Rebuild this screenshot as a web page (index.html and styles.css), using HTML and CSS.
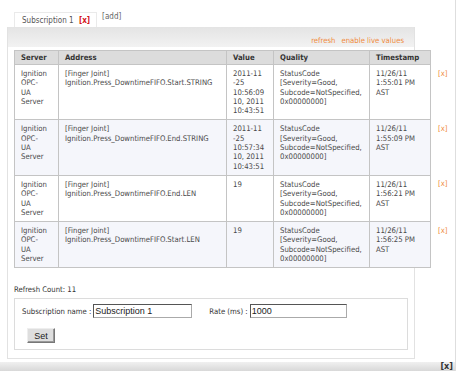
FILE: index.html
```html
<!DOCTYPE html>
<html lang="en">
<head>
    <meta charset="UTF-8">
    <title>Subscription 1</title>
    <link rel="stylesheet" href="styles.css">
</head>
<body>
    <div class="frame">
        <div class="tabs">
            <div class="tab">Subscription 1 <span class="tab-close">[x]</span></div>
            <a class="tab-add">[add]</a>
        </div>
        <div class="panel">
            <div class="panel-head">
                <a class="link">refresh</a>
                <a class="link">enable live values</a>
            </div>
            <table class="values">
                <colgroup>
                    <col class="c-server">
                    <col class="c-address">
                    <col class="c-value">
                    <col class="c-quality">
                    <col class="c-time">
                    <col class="c-remove">
                </colgroup>
                <thead>
                    <tr>
                        <th>Server</th>
                        <th>Address</th>
                        <th>Value</th>
                        <th>Quality</th>
                        <th>Timestamp</th>
                        <th class="remove"></th>
                    </tr>
                </thead>
                <tbody>
                    <tr>
                        <td>Ignition<br>OPC-<br>UA<br>Server</td>
                        <td>[Finger Joint]<br>Ignition.Press_DowntimeFIFO.Start.STRING</td>
                        <td>2011-11<br>-25<br>10:56:09<br>10, 2011<br>10:43:51</td>
                        <td>StatusCode [Severity=Good, Subcode=NotSpecified, 0x00000000]</td>
                        <td>11/26/11<br>1:55:01 PM<br>AST</td>
                        <td class="remove"><a class="link">[x]</a></td>
                    </tr>
                    <tr class="alt">
                        <td>Ignition<br>OPC-<br>UA<br>Server</td>
                        <td>[Finger Joint]<br>Ignition.Press_DowntimeFIFO.End.STRING</td>
                        <td>2011-11<br>-25<br>10:57:34<br>10, 2011<br>10:43:51</td>
                        <td>StatusCode [Severity=Good, Subcode=NotSpecified, 0x00000000]</td>
                        <td>11/26/11<br>1:55:09 PM<br>AST</td>
                        <td class="remove"><a class="link">[x]</a></td>
                    </tr>
                    <tr>
                        <td>Ignition<br>OPC-<br>UA<br>Server</td>
                        <td>[Finger Joint]<br>Ignition.Press_DowntimeFIFO.End.LEN</td>
                        <td>19</td>
                        <td>StatusCode [Severity=Good, Subcode=NotSpecified, 0x00000000]</td>
                        <td>11/26/11<br>1:56:21 PM<br>AST</td>
                        <td class="remove"><a class="link">[x]</a></td>
                    </tr>
                    <tr class="alt">
                        <td>Ignition<br>OPC-<br>UA<br>Server</td>
                        <td>[Finger Joint]<br>Ignition.Press_DowntimeFIFO.Start.LEN</td>
                        <td>19</td>
                        <td>StatusCode [Severity=Good, Subcode=NotSpecified, 0x00000000]</td>
                        <td>11/26/11<br>1:56:25 PM<br>AST</td>
                        <td class="remove"><a class="link">[x]</a></td>
                    </tr>
                </tbody>
            </table>
            <div class="count">Refresh Count: 11</div>
            <div class="settings">
                <div class="settings-row">
                    <label>Subscription name :</label>
                    <input type="text" class="field name-field" value="Subscription 1">
                    <label class="rate-label">Rate (ms) :</label>
                    <input type="text" class="field rate-field" value="1000">
                </div>
                <button class="set-btn">Set</button>
            </div>
        </div>
        <div class="statusbar"><span class="corner">[x]</span></div>
    </div>
</body>
</html>
```

FILE: styles.css
```css
html, body {
    margin: 0;
    padding: 0;
    background: #fff;
    font-family: "DejaVu Sans Condensed", "DejaVu Sans", sans-serif;
    font-size: 7.7px;
    color: #4a4a4a;
    overflow: hidden;
}

.frame {
    width: 456px;
    height: 371px;
    border-right: 1px solid #dedede;
    display: flex;
    flex-direction: column;
    padding-top: 12px;
    box-sizing: border-box;
}

.tabs {
    display: flex;
    align-items: flex-start;
    margin-left: 14px;
    height: 15px;
}

.tab {
    background: #fff;
    border: 1px solid #eaeaea;
    border-bottom: none;
    padding: 3px 6px 0 7px;
    height: 12px;
    color: #555;
    font-size: 8px;
}

.tab-close {
    color: #d4141c;
    font-weight: bold;
    margin-left: 3px;
}

.tab-add {
    color: #666;
    margin-left: 5px;
    font-size: 8px;
}

.panel {
    margin-left: 7px;
    width: 406px;
    height: 331px;
    border: 1px solid #e2e2e2;
    border-top: none;
    background: #fff;
}

.panel-head {
    height: 20px;
    background: linear-gradient(#e4e4e4, #f2f2f2);
    display: flex;
    justify-content: flex-end;
    align-items: flex-end;
    gap: 6px;
    padding-right: 10px;
    box-sizing: border-box;
    padding-bottom: 2px;
}

.link {
    color: #f08a3c;
}

.values {
    margin: 3px 0 0 6px;
    border-collapse: collapse;
    table-layout: fixed;
    width: 438px;
}

.c-server { width: 44px; }
.c-address { width: 168px; }
.c-value { width: 47px; }
.c-quality { width: 96px; }
.c-time { width: 61px; }
.c-remove { width: 22px; }

.values th,
.values td {
    border: 1px solid #c4c4c4;
    text-align: left;
    vertical-align: top;
    line-height: 9.3px;
    padding: 4px 3px 4px 6px;
    word-wrap: break-word;
}

.values th {
    background: #dcdcdc;
    color: #333;
    font-weight: bold;
    padding: 2px 3px 2px 6px;
    line-height: 9px;
}

.values td {
    background: #fff;
}

.values tr.alt td {
    background: #f5f6fb;
}

.values .remove,
.values tr.alt td.remove {
    border: none;
    background: transparent;
    padding: 4px 0 0 7px;
    white-space: nowrap;
}

.count {
    margin: 17px 0 0 6px;
    color: #333;
}

.settings {
    margin: 4px 0 0 6px;
    width: 394px;
    height: 52px;
    border: 1px solid #dcdcdc;
    box-sizing: border-box;
    padding: 5px 0 0 7px;
}

.settings-row {
    display: flex;
    align-items: center;
    color: #333;
}

.field {
    font-family: "Liberation Sans", Arial, sans-serif;
    font-size: 9px;
    height: 14px;
    box-sizing: border-box;
    border: 1px solid #aaa;
    border-top-color: #555;
    border-left-color: #555;
    padding: 0 1px;
    margin: 0;
    color: #222;
}

.name-field {
    width: 99px;
    margin-left: 2px;
}

.rate-label {
    margin-left: 17px;
}

.rate-field {
    width: 97px;
    margin-left: 2px;
}

.set-btn {
    margin: 10px 0 0 5px;
    width: 28px;
    height: 15px;
    padding: 0;
    font-family: "Liberation Sans", Arial, sans-serif;
    font-size: 9px;
    color: #222;
    background: #dedede;
    border: 1px solid #777;
    border-top-color: #eee;
    border-left-color: #eee;
    box-shadow: inset -1px -1px 0 #999;
}

.statusbar {
    margin-top: auto;
    height: 9px;
    background: linear-gradient(#f0f0f0, #d8d8d8);
    position: relative;
}

.corner {
    position: absolute;
    right: 2px;
    top: 0;
    font-size: 9px;
    line-height: 9px;
    color: #333;
    font-weight: bold;
}
```
